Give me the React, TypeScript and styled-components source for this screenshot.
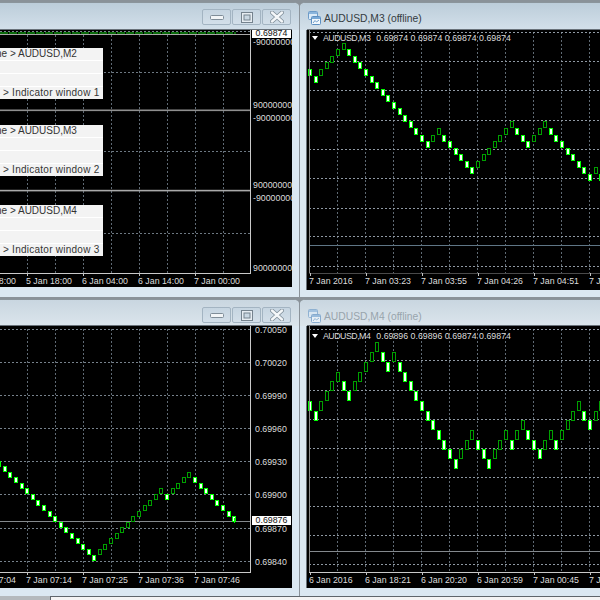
import * as React from "react";
import styled, { createGlobalStyle } from "styled-components";

const uiFont = `"Liberation Sans", Arial, sans-serif`;

const Global = createGlobalStyle`
  html, body {
    margin: 0;
    padding: 0;
    background: #8a9299;
    overflow: hidden;
  }
`;

const Desktop = styled.div`
  width: 600px;
  height: 600px;
  padding-top: 2px;
  box-sizing: border-box;
  display: grid;
  grid-template-columns: 299px 300px;
  grid-template-rows: 295px 297px 4px;
  column-gap: 1px;
  row-gap: 2px;
  overflow: hidden;
  font-family: ${uiFont};
`;

const Window = styled.section<{ $side: "left" | "right" }>`
  display: flex;
  flex-direction: column;
  min-width: 0;
  background: #dbe8f2;
  border-top: 1px solid #8b959c;
  border-radius: ${(p) => (p.$side === "left" ? "0 5px 0 0" : "5px 0 0 0")};
  padding: ${(p) => (p.$side === "left" ? "0 7px 0 0" : "0 0 0 7px")};
  overflow: hidden;
`;

const TitleBar = styled.header<{ $active: boolean }>`
  flex: none;
  height: ${(p) => (p.$active ? 27 : 26)}px;
  display: flex;
  align-items: flex-end;
  justify-content: space-between;
  padding-bottom: ${(p) => (p.$active ? 5 : 3)}px;
  box-sizing: border-box;
  margin: 0 -7px;
  padding-left: 8px;
  padding-right: 8px;
  background: ${(p) =>
    p.$active
      ? "linear-gradient(#bccdda, #d3e0ea)"
      : "linear-gradient(#c9d6e0, #dbe5ec)"};
`;

const Caption = styled.div<{ $active: boolean }>`
  display: flex;
  align-items: center;
  gap: 3px;
  height: 14px;
  font-size: 10.3px;
  color: ${(p) => (p.$active ? "#343b41" : "#98a4ac")};
  white-space: nowrap;
`;

const Buttons = styled.div`
  display: flex;
  gap: 1px;
  margin-left: auto;
`;

const CaptionButton = styled.div`
  width: 29px;
  height: 16px;
  display: flex;
  align-items: center;
  justify-content: center;
  border: 1px solid #a3b4c2;
  border-radius: 2px;
  box-sizing: border-box;
  background: linear-gradient(#c6d5e1, #d3dfe9);
`;

const Frame = styled.div<{ $height: number }>`
  position: relative;
  flex: none;
  height: ${(p) => p.$height}px;
  background: #000;
  box-shadow: 0 -1px 0 #69727a, -1px 0 0 #69727a;
  overflow: hidden;
`;

const Plot = styled.svg`
  display: block;
  width: 100%;
  height: 100%;
`;

const AxisText = styled.text`
  font-family: ${uiFont};
  font-size: 8.8px;
  fill: #dcdcdc;
`;

const Legend = styled.div<{ $top: number }>`
  position: absolute;
  left: 5px;
  top: ${(p) => p.$top}px;
  display: flex;
  align-items: center;
  gap: 5px;
  font-size: 8.8px;
  line-height: 10px;
  color: #dcdcdc;
  white-space: pre;
`;

const LegendMark = styled.span`
  width: 0;
  height: 0;
  border-left: 3px solid transparent;
  border-right: 3px solid transparent;
  border-top: 4px solid #fff;
`;

const LegendName = styled.span`
  letter-spacing: -0.5px;
  margin-right: 1px;
`;

const PriceTag = styled.div<{ $top: number }>`
  position: absolute;
  left: 252px;
  top: ${(p) => p.$top}px;
  width: 39px;
  height: 9px;
  background: #fff;
  color: #111;
  font-size: 8.8px;
  line-height: 9px;
  text-align: center;
`;

const InfoPanel = styled.div<{ $top: number }>`
  position: absolute;
  left: 0;
  top: ${(p) => p.$top}px;
  width: 103px;
  display: flex;
  flex-direction: column;
  gap: 1px;
  background: #fff;
`;

const InfoRow = styled.div<{ $indent?: number; $spacing?: number }>`
  height: 12px;
  text-indent: ${(p) => p.$indent ?? 0}px;
  letter-spacing: ${(p) => p.$spacing ?? 0}px;
  background: #f3f3f3;
  color: #333;
  font-size: 10px;
  line-height: 12px;
  white-space: nowrap;
  overflow: hidden;
`;

const BottomStrip = styled.footer`
  grid-column: 1 / 3;
  display: flex;
  margin-top: -2px;
`;

const StripEdge = styled.div`
  width: 50px;
  background: #b4b9bd;
`;

const StripRest = styled.div`
  flex: 1;
  border-top: 1px solid #5f666c;
  border-left: 1px solid #5f666c;
  background: #f4f4f4;
`;

type Candle = { x: number; y: number; up: boolean };

// positive run = falling (white) candles, negative run = rising (green) candles
const walk = (x0: number, y0: number, stepY: number, runs: number[]): Candle[] => {
  const out: Candle[] = [{ x: x0, y: y0, up: false }];
  let y = y0;
  let x = x0;
  runs.forEach((run) => {
    for (let i = 0; i < Math.abs(run); i++) {
      x += 5.6;
      y += run > 0 ? stepY : -stepY;
      out.push({ x, y, up: run < 0 });
    }
  });
  return out;
};

const Candles = ({ data, height }: { data: Candle[]; height: number }) => (
  <g shapeRendering="crispEdges">
    {data.map((c, i) => (
      <rect
        key={i}
        x={Math.round(c.x) - 1.5}
        y={Math.round(c.y - height / 2) + 0.5}
        width={3}
        height={height}
        fill={c.up ? "#000" : "#fff"}
        stroke={c.up ? "#00a000" : "#00ff00"}
        strokeWidth={1}
      />
    ))}
  </g>
);

const Grid = ({
  xs,
  ys,
  top,
  bottom,
  left,
  right,
  xColor,
  yColor,
}: {
  xs: number[];
  ys: number[];
  top: number;
  bottom: number;
  left: number;
  right: number;
  xColor: string;
  yColor: string;
}) => (
  <g strokeDasharray="2 2" shapeRendering="crispEdges">
    {xs.map((x) => (
      <line key={x} x1={x + 0.5} x2={x + 0.5} y1={top} y2={bottom} stroke={xColor} />
    ))}
    {ys.map((y) => (
      <line key={y} x1={left} x2={right} y1={y + 0.5} y2={y + 0.5} stroke={yColor} />
    ))}
  </g>
);

const TimeAxis = ({
  y,
  x0,
  labels,
  tickTop,
}: {
  y: number;
  x0: number;
  labels: string[];
  tickTop: number;
}) => (
  <g>
    {labels.map((label, i) => (
      <g key={label}>
        <line
          x1={x0 + i * 56 + 1.5}
          x2={x0 + i * 56 + 1.5}
          y1={tickTop}
          y2={tickTop + 3}
          stroke="#c4c4c4"
        />
        <AxisText x={x0 + i * 56} y={y}>
          {label}
        </AxisText>
      </g>
    ))}
  </g>
);

const MinimizeIcon = () => (
  <svg width="14" height="5" viewBox="0 0 14 5">
    <rect x="0.5" y="0.5" width="13" height="4" rx="1" fill="#f2f5f7" stroke="#7f8d98" />
  </svg>
);

const MaximizeIcon = () => (
  <svg width="12" height="11" viewBox="0 0 12 11">
    <rect x="0.5" y="0.5" width="11" height="10" fill="#e7edf2" stroke="#75838e" />
    <rect x="3" y="3" width="6" height="5" fill="#c9d7e2" stroke="#75838e" />
  </svg>
);

const CloseIcon = () => (
  <svg width="14" height="12" viewBox="0 0 14 12">
    <path d="M2 1.5 L12 10.5 M12 1.5 L2 10.5" stroke="#7f8d98" strokeWidth="4" strokeLinecap="round" />
    <path d="M2 1.5 L12 10.5 M12 1.5 L2 10.5" stroke="#f4f7f9" strokeWidth="2.4" strokeLinecap="round" />
  </svg>
);

const ChartIcon = ({ faded }: { faded?: boolean }) => (
  <svg width="13" height="14" viewBox="0 0 13 14" opacity={faded ? 0.65 : 1}>
    <rect x="0.5" y="0.5" width="9" height="8" rx="1" fill="#dcebf8" stroke="#6d9bc8" />
    <rect x="1" y="1" width="8" height="2" fill="#8bb5dc" />
    <rect x="3.5" y="5.5" width="9" height="8" rx="1" fill="#f2f8fd" stroke="#5c8fc2" />
    <rect x="4" y="6" width="8" height="2" fill="#7aa9d6" />
    <path d="M5 12 L7 9.5 L8.5 11 L11 9" fill="none" stroke="#4f86bd" strokeWidth="0.8" />
  </svg>
);

const WindowControls = () => (
  <Buttons>
    <CaptionButton>
      <MinimizeIcon />
    </CaptionButton>
    <CaptionButton>
      <MaximizeIcon />
    </CaptionButton>
    <CaptionButton>
      <CloseIcon />
    </CaptionButton>
  </Buttons>
);

const leftGridX = [27, 55, 83, 111, 139, 167, 195, 223];
const rightGridX = [337, 365, 393, 421, 449, 477, 505, 533, 561, 589];

const indicatorWindows = [
  { top: 18, pair: "AUDUSD,M2", n: 1 },
  { top: 95, pair: "AUDUSD,M3", n: 2 },
  { top: 175, pair: "AUDUSD,M4", n: 3 },
];

const m3Candles = walk(310, 73, 6.55, [1, -5, 15, -2, 6, -7, 3, -3, 8, -1, 1]);
const m2Candles = walk(-0.9, 463.3, 5.53, [17, -12, 1, -4, 8]);
const m4Candles = walk(310, 405.3, 9.73, [1, -4, 2, -5, 2, -1, 11, -3, 3, -3, 1, -2, 3, -2, 1, -4, 2, -2]);

const m2Prices = [
  ["0.70050", 329],
  ["0.70020", 362],
  ["0.69990", 395],
  ["0.69960", 428],
  ["0.69930", 461],
  ["0.69900", 494],
  ["0.69870", 528],
  ["0.69840", 561],
] as const;

const IndicatorChart = () => (
  <Frame $height={257}>
    <Plot viewBox="0 31 292 257">
      <Grid
        xs={leftGridX}
        ys={[73, 152, 234]}
        top={36}
        bottom={274}
        left={0}
        right={250}
        xColor="#5f6a74"
        yColor="#6d7882"
      />
      <line x1="0" x2="250" y1="32.5" y2="32.5" stroke="#7c8791" strokeDasharray="2 2" />
      <line x1="0" x2="236" y1="34" y2="34" stroke="#18d818" strokeDasharray="8 1" />
      <line x1="0" x2="250" y1="35.5" y2="35.5" stroke="#a8a8a8" />
      <rect x="0" y="110.5" width="250" height="1.6" fill="#8f8f8f" />
      <rect x="0" y="190.8" width="250" height="1.6" fill="#a9a9a9" />
      <line x1="250.5" x2="250.5" y1="31" y2="274" stroke="#c9c9c9" />
      <line x1="0" x2="251" y1="274.5" y2="274.5" stroke="#c9c9c9" />
      <AxisText x="253" y="45.5">-90000000</AxisText>
      <AxisText x="253" y="109">90000000</AxisText>
      <AxisText x="253" y="122">-90000000</AxisText>
      <AxisText x="253" y="189">90000000</AxisText>
      <AxisText x="253" y="202">-90000000</AxisText>
      <AxisText x="253" y="272">90000000</AxisText>
      <TimeAxis
        x0={-30}
        y={285}
        tickTop={274}
        labels={["5 Jan 08:00", "5 Jan 18:00", "6 Jan 04:00", "6 Jan 14:00", "7 Jan 00:00"]}
      />
    </Plot>
    {indicatorWindows.map((w) => (
      <InfoPanel key={w.n} $top={w.top}>
        <InfoRow $indent={-4}>{`ne > ${w.pair}`}</InfoRow>
        <InfoRow />
        <InfoRow />
        <InfoRow $indent={3} $spacing={0.25}>{`> Indicator window ${w.n}`}</InfoRow>
      </InfoPanel>
    ))}
    <PriceTag $top={-1}>0.69874</PriceTag>
  </Frame>
);

const PriceChart = () => (
  <Frame $height={262}>
    <Plot viewBox="0 326 292 262">
      <Grid
        xs={leftGridX}
        ys={m2Prices.map((p) => p[1])}
        top={329}
        bottom={572}
        left={0}
        right={250}
        xColor="#5f6a74"
        yColor="#77828c"
      />
      <line x1="0" x2="250" y1="521.5" y2="521.5" stroke="#84898d" />
      <Candles data={m2Candles} height={5} />
      <line x1="234.5" x2="234.5" y1="518" y2="523" stroke="#00ff00" />
      <line x1="250.5" x2="250.5" y1="326" y2="572" stroke="#c9c9c9" />
      <line x1="0" x2="251" y1="572.5" y2="572.5" stroke="#c9c9c9" />
      {m2Prices.map(([label, y]) => (
        <AxisText key={label} x="255" y={y + 3.5}>
          {label}
        </AxisText>
      ))}
      <TimeAxis
        x0={-30}
        y={583}
        tickTop={572}
        labels={["7 Jan 07:04", "7 Jan 07:14", "7 Jan 07:25", "7 Jan 07:36", "7 Jan 07:46"]}
      />
    </Plot>
    <PriceTag $top={190}>0.69876</PriceTag>
  </Frame>
);

const M3Chart = () => (
  <Frame $height={260}>
    <Plot viewBox="307 31 293 260">
      <Grid
        xs={rightGridX}
        ys={[33, 62, 91, 121, 150, 179, 209, 237, 267]}
        top={33}
        bottom={274}
        left={309}
        right={600}
        xColor="#5f6a74"
        yColor="#8f99a3"
      />
      <line x1="309" x2="600" y1="246.5" y2="246.5" stroke="#5f7686" />
      <Candles data={m3Candles} height={6} />
      <line x1="309.5" x2="309.5" y1="31" y2="275" stroke="#8a8a8a" />
      <line x1="309" x2="600" y1="274.5" y2="274.5" stroke="#4a4a4a" />
      <TimeAxis
        x0={309}
        y={285}
        tickTop={274}
        labels={["7 Jan 2016", "7 Jan 03:23", "7 Jan 03:55", "7 Jan 04:26", "7 Jan 04:51", "7 Jan 05:17"]}
      />
    </Plot>
    <Legend $top={3}>
      <LegendMark />
      <LegendName>AUDUSD,M3</LegendName>
      0.69874 0.69874 0.69874 0.69874
    </Legend>
  </Frame>
);

const M4Chart = () => (
  <Frame $height={262}>
    <Plot viewBox="307 326 293 262">
      <Grid
        xs={rightGridX}
        ys={[329, 360, 390, 419, 448, 477, 506, 535, 564]}
        top={329}
        bottom={572}
        left={309}
        right={600}
        xColor="#5f6a74"
        yColor="#8f99a3"
      />
      <line x1="309" x2="600" y1="551.5" y2="551.5" stroke="#84898d" />
      <Candles data={m4Candles} height={9} />
      <line x1="309.5" x2="309.5" y1="326" y2="573" stroke="#8a8a8a" />
      <line x1="309" x2="600" y1="572.5" y2="572.5" stroke="#c9c9c9" />
      <TimeAxis
        x0={309}
        y={583}
        tickTop={572}
        labels={["6 Jan 2016", "6 Jan 18:21", "6 Jan 20:20", "6 Jan 20:59", "7 Jan 00:45", "7 Jan 01:12"]}
      />
    </Plot>
    <Legend $top={5}>
      <LegendMark />
      <LegendName>AUDUSD,M4</LegendName>
      0.69896 0.69896 0.69874 0.69874
    </Legend>
  </Frame>
);

export default function App() {
  return (
    <Desktop>
      <Global />
      <Window $side="left">
        <TitleBar $active>
          <WindowControls />
        </TitleBar>
        <IndicatorChart />
      </Window>
      <Window $side="right">
        <TitleBar $active>
          <Caption $active>
            <ChartIcon />
            AUDUSD,M3 (offline)
          </Caption>
        </TitleBar>
        <M3Chart />
      </Window>
      <Window $side="left">
        <TitleBar $active={false}>
          <WindowControls />
        </TitleBar>
        <PriceChart />
      </Window>
      <Window $side="right">
        <TitleBar $active={false}>
          <Caption $active={false}>
            <ChartIcon faded />
            AUDUSD,M4 (offline)
          </Caption>
        </TitleBar>
        <M4Chart />
      </Window>
      <BottomStrip>
        <StripEdge />
        <StripRest />
      </BottomStrip>
    </Desktop>
  );
}
